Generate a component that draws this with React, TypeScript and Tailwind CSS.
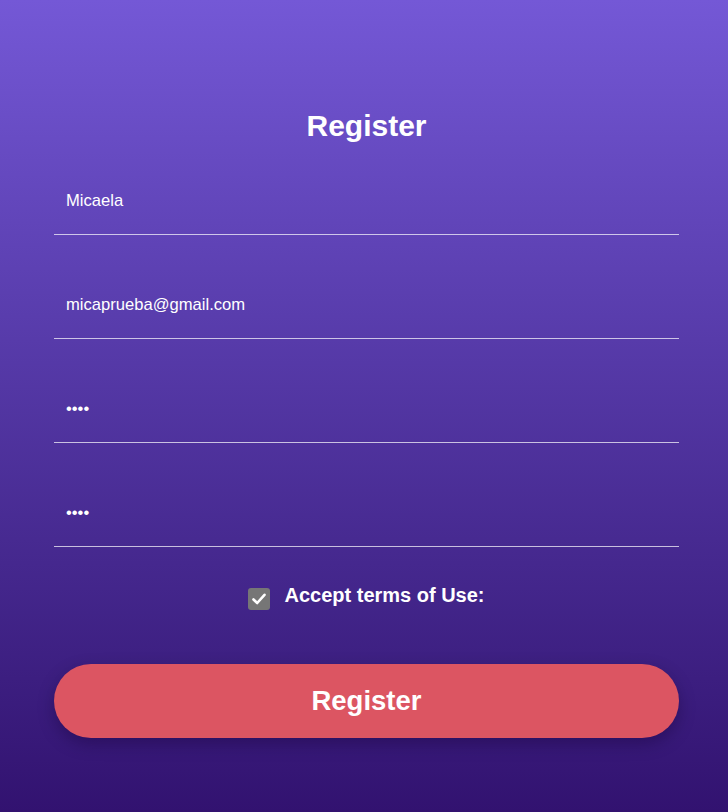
import { useState } from 'react';

const font = { fontFamily: '"Liberation Sans", Arial, sans-serif' };

export default function App() {
  const [name, setName] = useState('Micaela');
  const [email, setEmail] = useState('micaprueba@gmail.com');
  const [pass, setPass] = useState('1234');
  const [confirm, setConfirm] = useState('1234');
  const [accepted, setAccepted] = useState(true);

  const inputClass =
    'block w-full h-[64px] bg-transparent border-0 border-b border-white/70 px-3 pb-[3px] text-[16.6px] text-white outline-none';

  return (
    <div
      className="min-h-[812px] w-full bg-gradient-to-b from-[#7458d6] to-[#321270] pl-[54px] pr-[49px] pt-[108px] pb-[74px] text-white"
      style={font}
    >
      <h1 className="text-center text-[30px] leading-[36px] font-bold">Register</h1>

      <form className="mt-[27px] flex flex-col gap-[40px]" onSubmit={(e) => e.preventDefault()}>
        <input className={inputClass} type="text" value={name} onChange={(e) => setName(e.target.value)} />
        <input className={inputClass} type="email" value={email} onChange={(e) => setEmail(e.target.value)} />
        <input className={inputClass} type="password" value={pass} onChange={(e) => setPass(e.target.value)} />
        <input className={inputClass} type="password" value={confirm} onChange={(e) => setConfirm(e.target.value)} />
      </form>

      {/* terms checkbox */}
      <label className="mt-[36px] flex h-[24px] cursor-pointer items-center justify-center gap-[14px]">
        <span
          className="mt-[8px] flex h-[22px] w-[22px] items-center justify-center rounded-[3px] bg-[#767676]"
          onClick={() => setAccepted(!accepted)}
        >
          {accepted && (
            <svg width="16" height="16" viewBox="0 0 16 16" fill="none">
              <path d="M2.5 8.5 L6.2 12 L13.5 3.8" stroke="white" strokeWidth="2.6" strokeLinecap="round" strokeLinejoin="round" />
            </svg>
          )}
        </span>
        <span className="text-[20px] leading-[24px] font-bold">Accept terms of Use:</span>
      </label>

      <button
        type="button"
        className="mt-[57px] flex h-[74px] w-full items-center justify-center rounded-full bg-[#dc5562] text-[27.5px] font-bold text-white shadow-[0_6px_16px_rgba(20,0,50,0.35)]"
      >
        Register
      </button>
    </div>
  );
}
